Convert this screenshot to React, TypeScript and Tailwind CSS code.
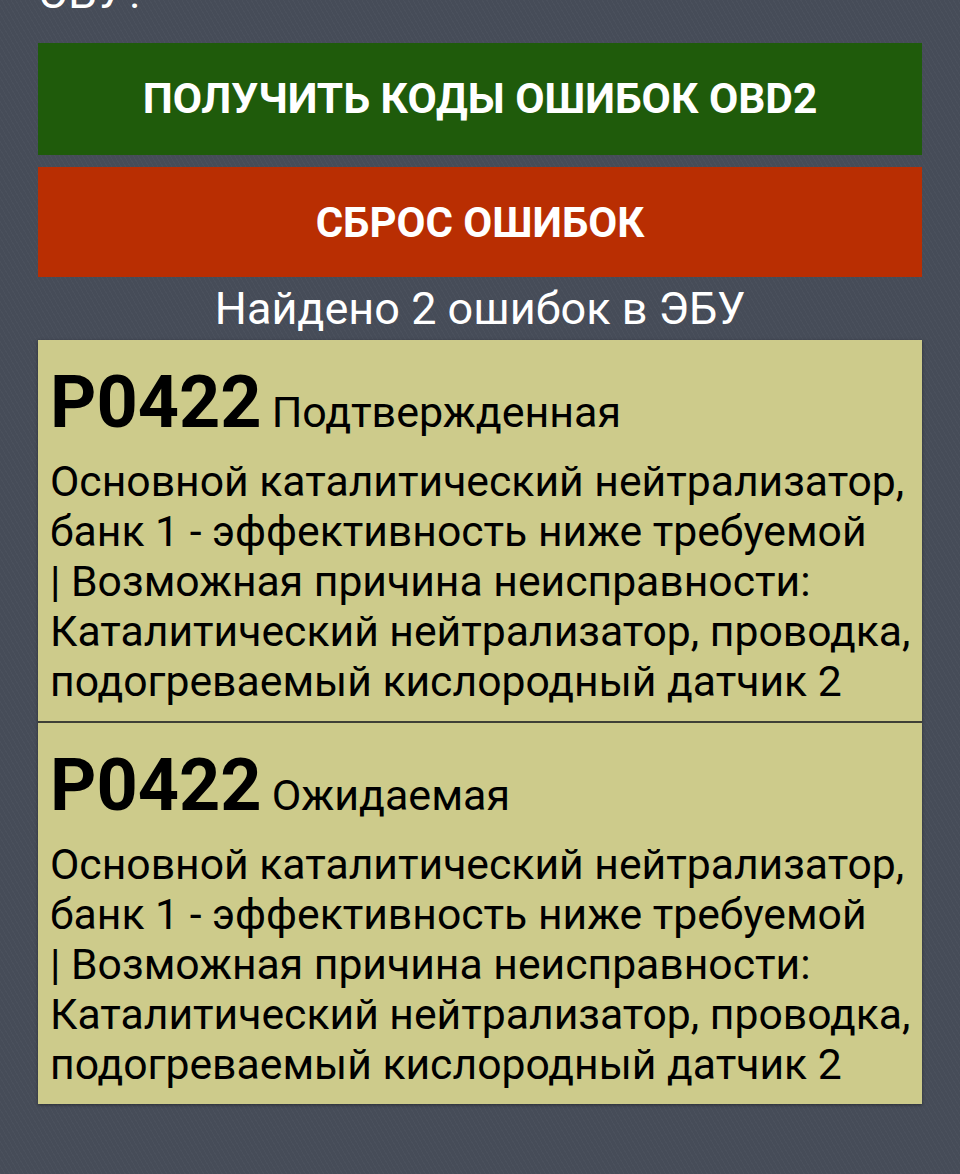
const codes = [
  {
    code: "P0422",
    status: "Подтвержденная",
    text: [
      "Основной каталитический нейтрализатор,",
      "банк 1 - эффективность ниже требуемой",
      "| Возможная причина неисправности:",
      "Каталитический нейтрализатор, проводка,",
      "подогреваемый кислородный датчик 2",
    ],
  },
  {
    code: "P0422",
    status: "Ожидаемая",
    text: [
      "Основной каталитический нейтрализатор,",
      "банк 1 - эффективность ниже требуемой",
      "| Возможная причина неисправности:",
      "Каталитический нейтрализатор, проводка,",
      "подогреваемый кислородный датчик 2",
    ],
  },
];

export default function App() {
  return (
    <div
      className="min-h-screen overflow-hidden bg-[#464c58] bg-[repeating-linear-gradient(60deg,rgba(255,255,255,0.025)_0px,rgba(255,255,255,0.025)_1px,transparent_1px,transparent_4px)] px-[38px] font-['Roboto',sans-serif]"
    >
      {/* question text cut off at top */}
      <p className="-mt-[32px] text-[45px] leading-[50px] text-white">ЭБУ?</p>

      {/* Buttons */}
      <div className="mt-[25px] flex flex-col gap-[12px]">
        <button className="flex h-[112px] items-center justify-center bg-[#1f5b0b] text-[42.5px] font-bold text-white">
          ПОЛУЧИТЬ КОДЫ ОШИБОК OBD2
        </button>
        <button className="flex h-[110px] items-center justify-center bg-[#b92e02] text-[42px] font-bold text-white">
          СБРОС ОШИБОК
        </button>
      </div>

      <div className="flex h-[63px] items-center justify-center text-[45px] text-white">
        Найдено 2 ошибок в ЭБУ
      </div>

      {/* Error list */}
      <div className="flex flex-col bg-[#cdcb8b] text-black shadow-[0_1px_3px_rgba(0,0,0,0.4)]">
        {codes.map((c, i) => (
          <div
            key={i}
            className={`pl-[12px] pr-[4px] pt-[22px] pb-[15px] ${i > 0 ? "border-t-2 border-[#3f4036]" : ""}`}
          >
            <div className="flex items-baseline gap-[10px]">
              <span className="text-[72px] leading-[82px] font-bold">{c.code}</span>
              <span className="text-[43px] leading-[50px]">{c.status}</span>
            </div>
            <div className="mt-[12px] text-[42.7px] leading-[50px]">
              {c.text.map((line) => (
                <div key={line} className="whitespace-nowrap">{line}</div>
              ))}
            </div>
          </div>
        ))}
      </div>
    </div>
  );
}
